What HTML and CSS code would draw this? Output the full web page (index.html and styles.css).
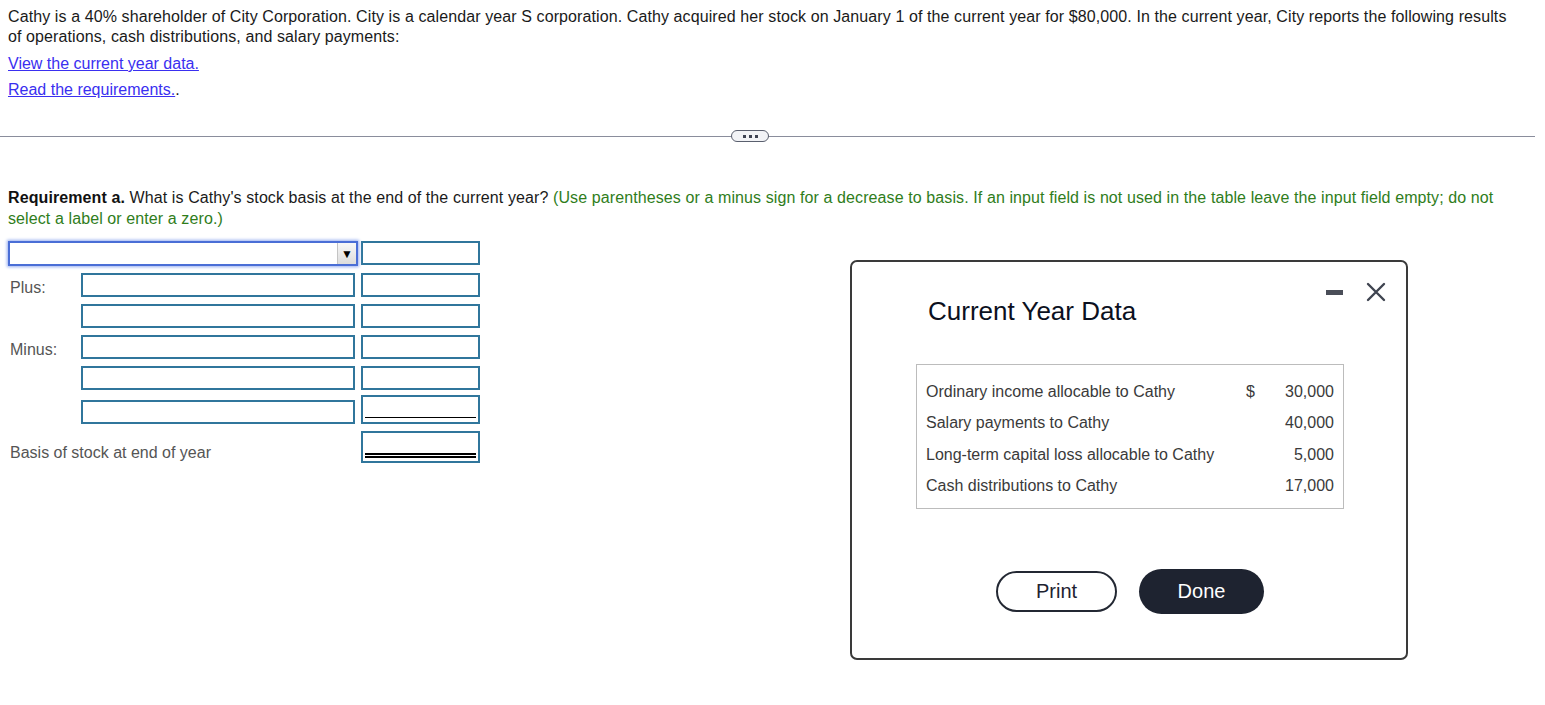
FILE: index.html
```html
<!DOCTYPE html>
<html>
<head>
<meta charset="utf-8">
<link rel="stylesheet" href="styles.css">
</head>
<body>
<div class="intro">
  <p class="lead">Cathy is a 40% shareholder of City Corporation. City is a calendar year S corporation. Cathy acquired her stock on January 1 of the current year for $80,000. In the current year, City reports the following results of operations, cash distributions, and salary payments:</p>
  <p class="link-line"><a href="#">View the current year data.</a></p>
  <p class="link-line"><a href="#">Read the requirements.</a>.</p>
</div>

<div class="divider">
  <span class="pill"><span class="dot"></span><span class="dot"></span><span class="dot"></span></span>
</div>

<p class="req"><b>Requirement a.</b> What is Cathy's stock basis at the end of the current year? <span class="hint">(Use parentheses or a minus sign for a decrease to basis. If an input field is not used in the table leave the input field empty; do not select a label or enter a zero.)</span></p>

<div class="grid">
  <div class="select span2"><span class="arrow">▼</span></div>
  <div class="box amt"></div>

  <div class="lbl">Plus:</div>
  <div class="box"></div>
  <div class="box amt"></div>

  <div class="lbl"></div>
  <div class="box"></div>
  <div class="box amt"></div>

  <div class="lbl">Minus:</div>
  <div class="box"></div>
  <div class="box amt"></div>

  <div class="lbl"></div>
  <div class="box"></div>
  <div class="box amt"></div>

  <div class="lbl"></div>
  <div class="box low"></div>
  <div class="box amt single"><span class="uline"></span></div>

  <div class="lbl total span2">Basis of stock at end of year</div>
  <div class="box amt double"><span class="uline2"></span><span class="uline2"></span></div>
</div>

<div class="modal">
  <div class="controls">
    <span class="minimize"></span>
    <svg class="close" width="20" height="20" viewBox="0 0 20 20"><path d="M2 2 L18 18 M18 2 L2 18" stroke="#3f4450" stroke-width="2.4" stroke-linecap="round"/></svg>
  </div>
  <h2 class="title">Current Year Data</h2>
  <table class="data">
    <tr><td class="desc">Ordinary income allocable to Cathy</td><td class="cur">$</td><td class="val">30,000</td></tr>
    <tr><td class="desc">Salary payments to Cathy</td><td class="cur"></td><td class="val">40,000</td></tr>
    <tr><td class="desc">Long-term capital loss allocable to Cathy</td><td class="cur"></td><td class="val">5,000</td></tr>
    <tr><td class="desc">Cash distributions to Cathy</td><td class="cur"></td><td class="val">17,000</td></tr>
  </table>
  <div class="buttons">
    <button class="btn print">Print</button>
    <button class="btn done">Done</button>
  </div>
</div>
</body>
</html>
```

FILE: styles.css
```css
body {
  margin: 0;
  font-family: "Liberation Sans", Arial, sans-serif;
  font-size: 16px;
  color: #1a1a1a;
  background: #fff;
  width: 1545px;
  height: 705px;
  overflow: hidden;
  position: relative;
}
.intro {
  padding: 7px 8px 0 8px;
  width: 1516px;
}
.lead {
  margin: 0;
  line-height: 20px;
  letter-spacing: 0.1px;
}
.link-line {
  margin: 7px 0 0 0;
  line-height: 20px;
}
.link-line + .link-line {
  margin-top: 6px;
}
.link-line a {
  color: #3a2ff0;
  text-decoration: underline;
}
.divider {
  margin-top: 30px;
  height: 12px;
  width: 1535px;
  position: relative;
  display: flex;
  justify-content: flex-start;
  align-items: center;
  padding-left: 731px;
  box-sizing: border-box;
}
.divider::before {
  content: "";
  position: absolute;
  left: 0;
  right: 0;
  top: 6px;
  height: 1px;
  background: #8a8d9c;
}
.pill {
  position: relative;
  width: 36px;
  height: 10px;
  border: 1px solid #5a5f6e;
  border-radius: 6px;
  background: #f2f3f6;
  display: flex;
  justify-content: center;
  align-items: center;
  gap: 3px;
}
.dot {
  width: 3px;
  height: 3px;
  background: #3e4352;
}
.req {
  margin: 45px 0 0 0;
  padding: 0 8px;
  line-height: 21px;
  width: 1500px;
  letter-spacing: 0.1px;
}
.req b {
  font-weight: bold;
  color: #111;
}
.hint {
  color: #2f7d1b;
}
.grid {
  margin: 12px 0 0 8px;
  display: grid;
  grid-template-columns: 67px 274px 119px;
  column-gap: 6px;
  row-gap: 7px;
}
.span2 {
  grid-column: 1 / span 2;
}
.box {
  border: 1px solid #30769c;
  outline: 1px solid #30769c;
  outline-offset: -2px;
  box-sizing: border-box;
  height: 24px;
  background: #fff;
}
.select {
  height: 25px;
  box-sizing: border-box;
  border: 2px solid #4a6ed6;
  box-shadow: 0 0 3px 1px #97aef0;
  background: #fff;
  position: relative;
  margin-right: -3px;
}
.arrow {
  position: absolute;
  right: 0;
  top: 0;
  bottom: 0;
  width: 18px;
  background: linear-gradient(#f8f8f8, #dcdcdc);
  border-left: 1px solid #c4c4c4;
  font-size: 12px;
  display: flex;
  align-items: center;
  justify-content: center;
  color: #000;
}
.lbl {
  color: #555;
  font-size: 16px;
  line-height: 18px;
  height: 24px;
  box-sizing: border-box;
  display: flex;
  align-items: center;
  padding-left: 2px;
  padding-top: 6px;
  white-space: nowrap;
}
.box.low {
  align-self: end;
}
.box.single {
  height: 29px;
  position: relative;
  margin-top: -2px;
}
.uline {
  position: absolute;
  left: 3px;
  right: 3px;
  bottom: 5px;
  height: 0;
  border-top: 1px solid #000;
}
.lbl.total {
  align-items: flex-end;
  padding-top: 0;
  height: auto;
  line-height: 20px;
}
.box.double {
  height: 32px;
  display: flex;
  flex-direction: column;
  justify-content: flex-end;
  gap: 1px;
  padding: 0 3px 4px 3px;
}
.uline2 {
  display: block;
  height: 2px;
  background: #000;
}
.modal {
  position: absolute;
  left: 850px;
  top: 260px;
  width: 558px;
  height: 400px;
  box-sizing: border-box;
  border: 2px solid #3a3a3a;
  border-radius: 7px;
  background: #fff;
  padding: 0 0 0 64px;
}
.controls {
  position: absolute;
  right: 20px;
  top: 20px;
  display: flex;
  align-items: center;
  gap: 23px;
}
.minimize {
  display: block;
  width: 17px;
  height: 5px;
  background: #4a4e58;
}
.title {
  margin: 33px 0 0 12px;
  font-size: 26px;
  font-weight: normal;
  color: #0b1020;
  line-height: 32px;
}
.data {
  margin-top: 37px;
  border: 1px solid #bcbcbc;
  border-collapse: separate;
  border-spacing: 0;
  width: 428px;
  padding: 11px 0 6px 0;
  color: #3a3a3a;
  font-size: 16px;
}
.data td {
  height: 31.5px;
  padding: 0;
  line-height: 20px;
}
.desc {
  padding-left: 9px !important;
  width: 320px;
}
.cur {
  width: 32px;
  text-align: left;
}
.val {
  text-align: right;
  padding-right: 9px !important;
}
.buttons {
  margin-top: 60px;
  margin-left: 80px;
  display: flex;
  align-items: center;
  gap: 22px;
}
.btn {
  font-family: "Liberation Sans", Arial, sans-serif;
  font-size: 20px;
  cursor: pointer;
}
.print {
  width: 121px;
  height: 41px;
  border: 2px solid #232833;
  border-radius: 21px;
  background: #fff;
  color: #1d2230;
}
.done {
  width: 125px;
  height: 45px;
  border: none;
  border-radius: 23px;
  background: #1e2330;
  color: #fff;
}
```
